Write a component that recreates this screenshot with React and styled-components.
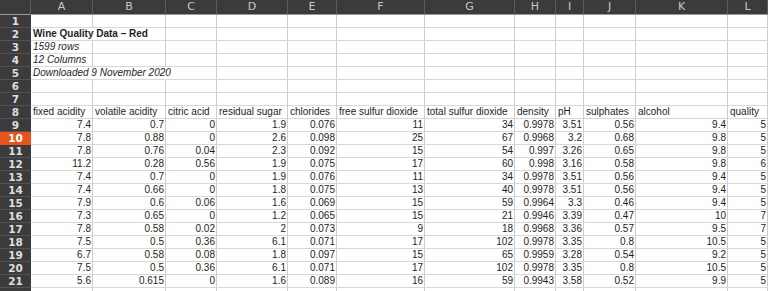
import React from 'react';
import styled, { createGlobalStyle } from 'styled-components';

const GlobalStyle = createGlobalStyle`
    html, body {
        margin: 0;
        padding: 0;
        background: #ffffff;
        overflow: hidden;
    }
`;

const COL_WIDTHS = [31, 62, 73, 51, 71, 49, 88, 90, 41, 28, 52, 92, 40];
const LETTERS = ['A', 'B', 'C', 'D', 'E', 'F', 'G', 'H', 'I', 'J', 'K', 'L'];

const Sheet = styled.div`
    // 시트 전체
    display: grid;
    grid-template-columns: ${COL_WIDTHS.map(w => `${w}px`).join(' ')};
    grid-template-rows: 15px;
    grid-auto-rows: 13px;
    width: 768px;
    font-family: "Liberation Sans", Arial, sans-serif;
    font-size: 10px;
    color: #1e1e1e;
`;

const Corner = styled.div`
    background: #3b3b3b;
    border-right: 1px solid #5a5a5a;
    border-bottom: 1px solid #9a9a9a;
    box-sizing: border-box;
`;

const ColHeader = styled.div`
    background: #3b3b3b;
    color: #c9c9c9;
    font-family: "DejaVu Sans", "Liberation Sans", sans-serif;
    font-size: 11px;
    line-height: 14px;
    text-align: center;
    border-right: 1px solid #5a5a5a;
    border-bottom: 1px solid #9a9a9a;
    box-sizing: border-box;
`;

const RowHeader = styled.div`
    background: ${props => props.$active ? '#e6541d' : '#3b3b3b'};
    color: ${props => props.$active ? '#ffffff' : '#dedede'};
    font-family: "DejaVu Sans", "Liberation Sans", sans-serif;
    font-weight: bold;
    font-size: 10.5px;
    line-height: 12px;
    text-align: center;
    border-bottom: 1px solid ${props => props.$active ? '#e6541d' : '#535353'};
    box-sizing: border-box;
`;

const Cell = styled.div`
    grid-column: span ${props => props.$span || 1};
    border-right: 1px solid #cdcdcd;
    border-bottom: 1px solid #d8d8d8;
    box-sizing: border-box;
    padding: 0 1px 0 2px;
    line-height: 12px;
    white-space: nowrap;
    overflow: hidden;
    text-align: ${props => props.$num ? 'right' : 'left'};
    font-weight: ${props => props.$bold ? 'bold' : 'normal'};
    font-style: ${props => props.$italic ? 'italic' : 'normal'};
`;

const HEADINGS = [
    'fixed acidity', 'volatile acidity', 'citric acid', 'residual sugar', 'chlorides',
    'free sulfur dioxide', 'total sulfur dioxide', 'density', 'pH', 'sulphates', 'alcohol', 'quality',
];

const DATA = [
    [7.4, 0.7, 0, 1.9, 0.076, 11, 34, 0.9978, 3.51, 0.56, 9.4, 5],
    [7.8, 0.88, 0, 2.6, 0.098, 25, 67, 0.9968, 3.2, 0.68, 9.8, 5],
    [7.8, 0.76, 0.04, 2.3, 0.092, 15, 54, 0.997, 3.26, 0.65, 9.8, 5],
    [11.2, 0.28, 0.56, 1.9, 0.075, 17, 60, 0.998, 3.16, 0.58, 9.8, 6],
    [7.4, 0.7, 0, 1.9, 0.076, 11, 34, 0.9978, 3.51, 0.56, 9.4, 5],
    [7.4, 0.66, 0, 1.8, 0.075, 13, 40, 0.9978, 3.51, 0.56, 9.4, 5],
    [7.9, 0.6, 0.06, 1.6, 0.069, 15, 59, 0.9964, 3.3, 0.46, 9.4, 5],
    [7.3, 0.65, 0, 1.2, 0.065, 15, 21, 0.9946, 3.39, 0.47, 10, 7],
    [7.8, 0.58, 0.02, 2, 0.073, 9, 18, 0.9968, 3.36, 0.57, 9.5, 7],
    [7.5, 0.5, 0.36, 6.1, 0.071, 17, 102, 0.9978, 3.35, 0.8, 10.5, 5],
    [6.7, 0.58, 0.08, 1.8, 0.097, 15, 65, 0.9959, 3.28, 0.54, 9.2, 5],
    [7.5, 0.5, 0.36, 6.1, 0.071, 17, 102, 0.9978, 3.35, 0.8, 10.5, 5],
    [5.6, 0.615, 0, 1.6, 0.089, 16, 59, 0.9943, 3.58, 0.52, 9.9, 5],
];

const blanks = n => Array.from({ length: n }, () => ({}));

const buildRows = () => {
    const rows = [];
    rows.push(blanks(12));
    rows.push([{ text: 'Wine Quality Data – Red', bold: true, span: 2 }, ...blanks(10)]);
    rows.push([{ text: '1599 rows', italic: true }, ...blanks(11)]);
    rows.push([{ text: '12 Columns', italic: true }, ...blanks(11)]);
    rows.push([{ text: 'Downloaded 9 November 2020', italic: true, span: 3 }, ...blanks(9)]);
    rows.push(blanks(12));
    rows.push(blanks(12));
    rows.push(HEADINGS.map(h => ({ text: h })));
    DATA.forEach(r => rows.push(r.map(v => ({ text: String(v), num: true }))));
    // 아래쪽 잘린 줄
    rows.push(blanks(12));
    return rows;
};

const App = () => {
    const rows = buildRows();
    const last = rows.length - 1;

    return (
        <>
            <GlobalStyle />
            <Sheet>
                <Corner />
                {LETTERS.map(l => <ColHeader key={l}>{l}</ColHeader>)}
                {rows.map((cells, idx) => (
                    <React.Fragment key={idx}>
                        <RowHeader $active={idx + 1 === 10}>{idx === last ? '' : idx + 1}</RowHeader>
                        {cells.map((c, ci) => (
                            <Cell
                                key={ci}
                                $span={c.span}
                                $num={c.num}
                                $bold={c.bold}
                                $italic={c.italic}
                            >
                                {c.text}
                            </Cell>
                        ))}
                    </React.Fragment>
                ))}
            </Sheet>
        </>
    );
};

export default App;
